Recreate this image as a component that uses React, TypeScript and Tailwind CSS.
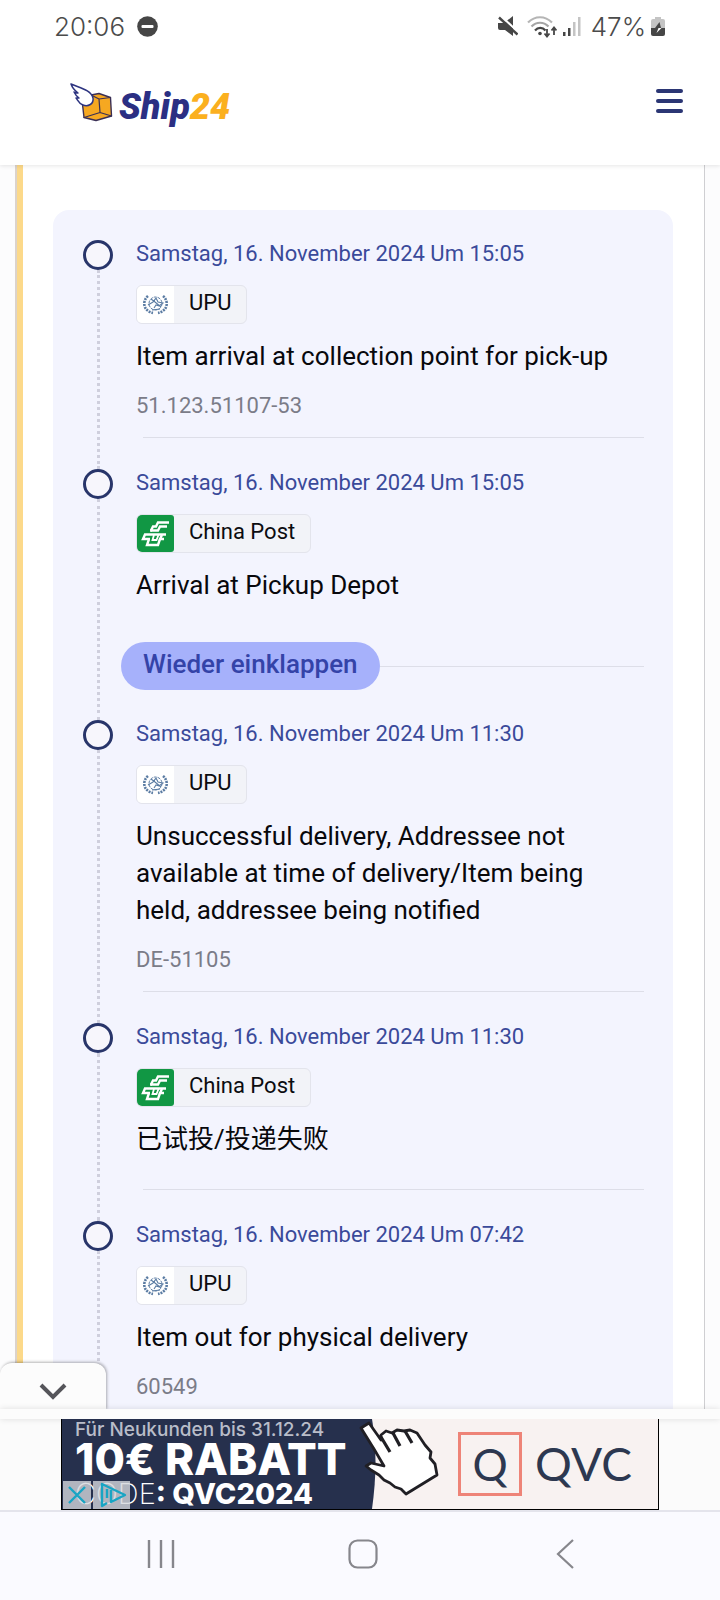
import { clsx } from 'clsx';

type Carrier = 'UPU' | 'China Post';

interface TrackingEvent {
  date: string;
  carrier: Carrier;
  title: string;
  code?: string;
  collapsible?: boolean;
}

const events: TrackingEvent[] = [
  {
    date: 'Samstag, 16. November 2024 Um 15:05',
    carrier: 'UPU',
    title: 'Item arrival at collection point for pick-up',
    code: '51.123.51107-53',
  },
  {
    date: 'Samstag, 16. November 2024 Um 15:05',
    carrier: 'China Post',
    title: 'Arrival at Pickup Depot',
    collapsible: true,
  },
  {
    date: 'Samstag, 16. November 2024 Um 11:30',
    carrier: 'UPU',
    title:
      'Unsuccessful delivery, Addressee not available at time of delivery/Item being held, addressee being notified',
    code: 'DE-51105',
  },
  {
    date: 'Samstag, 16. November 2024 Um 11:30',
    carrier: 'China Post',
    title: '已试投/投递失败',
  },
  {
    date: 'Samstag, 16. November 2024 Um 07:42',
    carrier: 'UPU',
    title: 'Item out for physical delivery',
    code: '60549',
  },
];

function StatusBar() {
  return (
    <div className="flex h-[53px] items-center justify-between pl-[54px] pr-[55px] text-[#4b4b4b]">
      <div className="flex items-center gap-3">
        <span className="font-[Inter,sans-serif] text-[26px] font-light leading-8">20:06</span>
        <svg width="21" height="21" viewBox="0 0 21 21">
          <circle cx="10.5" cy="10.5" r="10.3" fill="#464646" />
          <rect x="4.5" y="9" width="12" height="3" rx="1" fill="#fff" />
        </svg>
      </div>
      <div className="flex items-center">
        <svg width="20" height="21" viewBox="0 0 20 21" fill="#464646">
          <path d="M0 7h6l9-7v20l-8-6H2a2 2 0 0 1-2-2z" />
          <path d="M3 0l17 16" stroke="#fff" strokeWidth="2.2" />
          <path d="M1 1.500L19.500 18.500" stroke="#464646" strokeWidth="2.400" />
        </svg>
        <svg className="ml-[9px]" width="30" height="24" viewBox="0 0 30 24" fill="none" strokeWidth="2.200">
          <path d="M1 7.500C8 .5 18 .5 25 7.500" stroke="#b5b5b5" />
          <path d="M4.500 11.500c5-5 12-5 17 0" stroke="#a5a5a5" />
          <path d="M8 15.500c3-3.500 7.500-3.500 10.500 0" stroke="#464646" />
          <circle cx="13" cy="18.500" r="1.800" fill="#464646" />
          <path d="M20 14v7M17.500 18.500l2.500 3 2.500-3M27 20v-7M24.500 15.500l2.500-3 2.500 3" stroke="#464646" strokeWidth="1.800" />
        </svg>
        <svg className="ml-[6px]" width="18" height="20" viewBox="0 0 18 20">
          <rect x="0" y="15" width="2.500" height="4" fill="#464646" />
          <rect x="5" y="11" width="2.500" height="8" fill="#464646" />
          <rect x="10" y="5" width="2.500" height="14" fill="#c4c4c4" />
          <rect x="15" y="0" width="2.500" height="19" fill="#c4c4c4" />
        </svg>
        <span className="ml-[10px] font-[Inter,sans-serif] text-[26px] font-light leading-8">47%</span>
        <svg className="ml-[5px]" width="14" height="19" viewBox="0 0 14 19">
          <path d="M4 0h6v2h2a2 2 0 0 1 2 2v7H0V4a2 2 0 0 1 2-2h2z" fill="#c4c4c4" />
          <path d="M0 11h14v6a2 2 0 0 1-2 2H2a2 2 0 0 1-2-2z" fill="#464646" />
          <path d="M8.500 5L4 11h6z" fill="#464646" />
          <path d="M4.500 11h3l-2 5 5-5z" fill="#fff" />
        </svg>
      </div>
    </div>
  );
}

function Logo() {
  return (
    <a href="#" aria-label="Ship24" className="flex items-start gap-[6px]">
      <svg width="43" height="39" viewBox="0 0 43 39" strokeLinejoin="round" strokeLinecap="round">
        <path d="M12 17l9-5 8-1.500 11.500 4 1 18.500L26 37.500 14 34.500z" fill="#f6a821" stroke="#3a2f55" strokeWidth="1.400" />
        <path d="M21 12l8 4 11.500-1.500M29 16l1 13.500 11.500 3.500M30 29.500l-16 5" fill="none" stroke="#3a2f55" strokeWidth="1.200" />
        <path d="M1 1c9 4 20 6 22 14 1 6-5 9-10 7C8 20 8 17 6 15c1 0 2 0 3 0-3-2-4-4-5-6 1 1 2 1 4 1C4 7 2 4 1 1z" fill="#fff" stroke="#2d3480" strokeWidth="1.500" />
      </svg>
      <span className="pt-1 font-[Roboto,sans-serif] text-[36px] font-black italic leading-10 text-[#2b2f83]">
        Ship<span className="text-[#fbb01f]">24</span>
      </span>
    </a>
  );
}

function Header() {
  return (
    <header className="relative z-10 shrink-0 bg-white shadow-[0_1px_4px_rgba(0,0,0,0.1)]">
      <StatusBar />
      <div className="flex h-28 items-start justify-between pl-[70px] pr-[37px] pt-[30px]">
        <Logo />
        <button type="button" aria-label="Menü" className="flex w-[27px] flex-col gap-[6px] pt-[6px]">
          <span className="h-1 w-full rounded-sm bg-[#2b3674]" />
          <span className="h-1 w-full rounded-sm bg-[#2b3674]" />
          <span className="h-1 w-full rounded-sm bg-[#2b3674]" />
        </button>
      </div>
    </header>
  );
}

function UpuIcon() {
  return (
    <svg width="37" height="37" viewBox="0 0 37 37" fill="none" stroke="#5b7ca3">
      <rect width="37" height="37" fill="#fff" stroke="none" />
      <path d="M11 10c-6 5-5 15 5 17M26 10c6 5 5 15-5 17" strokeWidth="2.600" strokeDasharray="2 1" />
      <circle cx="18.500" cy="17.500" r="6.500" strokeWidth="1" strokeDasharray="3 1" />
      <path d="M11 19l5-3 3-4 2 4 5 1-4 3-3-1-2 3M14 13l4 3 6 5M15 24l8-1" strokeWidth="1.100" />
    </svg>
  );
}

function ChinaPostIcon() {
  return (
    <svg width="37" height="37" viewBox="0 0 37 37">
      <rect width="37" height="37" rx="3" fill="#119744" />
      <g fill="none" stroke="#fff" strokeWidth="2.400">
        <path d="M32 7.500H21l-2 4h-3l-2 4h-1" />
        <path d="M30 11.500h-7l-2 4h-7" />
        <path d="M29 19.500H8l-2 4.500h7" />
        <path d="M27 24h-4l2-4M23 24l-2 6H10l2-6" />
        <path d="M17 20l-1.500 5h4l2-5" strokeWidth="1.800" />
      </g>
    </svg>
  );
}

function CarrierBadge({ carrier }: { carrier: Carrier }) {
  return (
    <div className="mt-[17px] flex h-[39px] w-fit items-center overflow-hidden rounded-md border border-[#e3e4ec] bg-[#f2f3f8]">
      {carrier === 'UPU' ? <UpuIcon /> : <ChinaPostIcon />}
      <span className="px-[15px] pb-[3px] text-[22px] leading-7 text-[#0c0c10]">{carrier}</span>
    </div>
  );
}

function EventRow({ event, last }: { event: TrackingEvent; last: boolean }) {
  return (
    <li className="flex gap-[23px]">
      <div className="flex w-[30px] shrink-0 flex-col items-center">
        <span className="h-[30px] w-[30px] shrink-0 rounded-full border-3 border-[#28356a] bg-[#f7f6fc]" />
        <span className="flex-1 border-l-3 border-dotted border-[#cfcfdd]" />
      </div>
      <div className="min-w-0 flex-1">
        <p className="text-[22px] leading-7 text-[#3a4a9a]">{event.date}</p>
        <CarrierBadge carrier={event.carrier} />
        <p className="mt-[14px] pr-4 text-[26px] leading-[37px] text-[#08080c]">{event.title}</p>
        <p className={clsx('text-[22px] leading-7 text-[#7b7c88]', event.code ? 'mt-[17px]' : 'h-[31px]')}>
          {event.code}
        </p>
        {event.collapsible ? (
          <div className="-ml-[15px] mt-[7px] flex items-center pb-[30px]">
            <button
              type="button"
              className="h-12 rounded-full bg-[#a6b1fb] px-[22px] pb-[3px] text-[26px] font-medium leading-[37px] text-[#3443a8]"
            >
              Wieder einklappen
            </button>
            <span className="h-px flex-1 bg-[#dddee8]" />
          </div>
        ) : (
          <div className={clsx('ml-[7px] pb-[31px]', event.code && 'pt-[17px]', last && 'invisible')}>
            <div className="h-px bg-[#dddee8]" />
          </div>
        )}
      </div>
    </li>
  );
}

function HandPointer() {
  return (
    <svg className="h-[90px] w-[85px] shrink-0" viewBox="0 0 85 90">
      <path d="M0 0h13q7 40 0 90H0z" fill="#26304d" />
      <path
        d="M2 9l8-5 12 17v-5l5-4 6 2 5-3 7 1 6-1 7 3 6 9 2 3 6 7-1 6 5 6 2 11-31 19-5-5-6-2-5-4-6-3-5-5-8-5-5-4 5-3 13 3-10-17z"
        fill="#fff"
        stroke="#201f24"
        strokeWidth="2.800"
        strokeLinejoin="round"
      />
      <path d="M22 18l9 15M34 14l7 13M46 12l7 12" fill="none" stroke="#201f24" strokeWidth="3.200" />
    </svg>
  );
}

function AdBanner() {
  return (
    <a
      href="#"
      className="relative mx-auto flex h-[91px] w-[598px] max-w-full overflow-hidden border-b border-r border-l border-black bg-[#f8f2f1] font-[Inter,sans-serif]"
    >
      <div className="w-[297px] shrink-0 whitespace-nowrap bg-[#26304d] pl-[13px] text-white">
        <p className="text-[19px] font-medium leading-[22px] text-[#b9bdc9]">Für Neukunden bis 31.12.24</p>
        <p className="text-[44px] font-extrabold leading-[36px]">10€ RABATT</p>
        <p className="text-[29px] leading-[34px]">
          <span className="font-extralight">CODE</span>
          <span className="font-extrabold">: QVC2024</span>
        </p>
      </div>
      <HandPointer />
      <div className="flex items-center gap-[13px] pl-[14px] font-[Lato,sans-serif] leading-none text-[#2d3850]">
        <span className="flex h-16 w-16 items-center justify-center border-3 border-[#ee8478] text-[44px]">Q</span>
        <span className="text-[46px]">QVC</span>
      </div>
      <svg className="absolute bottom-0 left-0" width="68" height="28" viewBox="0 0 68 28" fill="none">
        <rect x="1" width="28" height="28" fill="#d5d7dc" fillOpacity=".8" />
        <rect x="31" width="37" height="28" fill="#d5d7dc" fillOpacity=".8" />
        <path d="M7 6l16 16M23 6L7 22" stroke="#18a5c4" strokeWidth="2.400" />
        <path d="M45 22l-5 3V3l23 11-14 7V9M45 8v9" stroke="#18a5c4" strokeWidth="2.400" strokeLinejoin="round" />
      </svg>
    </a>
  );
}

function NavigationBar() {
  return (
    <nav className="flex h-[90px] items-center justify-between border-t-2 border-[#e4e4ec] bg-[#fafaff] pb-1 pl-[146px] pr-[140px] text-[#86868c]">
      <button type="button" aria-label="Letzte Apps" className="flex w-[30px] justify-center">
        <svg width="28" height="30" viewBox="0 0 28 30" stroke="currentColor" strokeWidth="2.400">
          <path d="M2 1v28M14 1v28M26 1v28" />
        </svg>
      </button>
      <button type="button" aria-label="Startseite" className="flex w-[30px] justify-center">
        <svg width="30" height="30" viewBox="0 0 30 30" fill="none" stroke="currentColor" strokeWidth="2.200">
          <rect x="1.500" y="1.500" width="27" height="27" rx="8" />
        </svg>
      </button>
      <button type="button" aria-label="Zurück" className="flex w-[30px] justify-center">
        <svg width="18" height="30" viewBox="0 0 18 30" fill="none" stroke="currentColor" strokeWidth="2.200">
          <path d="M17 1L2 15l15 14" />
        </svg>
      </button>
    </nav>
  );
}

export default function App() {
  return (
    <div className="flex h-screen flex-col overflow-hidden bg-[#fcfcfd] font-[Roboto,'Noto_Sans_CJK_SC',sans-serif]">
      <Header />
      <main className="min-h-0 flex-1 overflow-hidden pl-[15px] pr-[15px]">
        <div className="min-h-full border-l-2 border-r border-l-[#dcd3cb] border-r-[#cfcfd2]">
          <div className="border-l-6 border-[#fcd98a] bg-white pl-[30px] pr-[31px] pt-[45px]">
            <ol className="rounded-2xl bg-[#f3f4fe] pl-[30px] pr-[29px] pt-[30px]">
              {events.map((event, i) => (
                <EventRow key={i} event={event} last={i === events.length - 1} />
              ))}
            </ol>
          </div>
        </div>
      </main>
      <footer className="relative shrink-0 bg-[#fbfbfb]">
        <button
          type="button"
          aria-label="Anzeige ausblenden"
          className="absolute -top-[46px] left-0 flex h-[47px] w-[106px] items-center justify-center rounded-t-xl bg-[#fcfcfc] pt-2 shadow-[1px_-1px_3px_rgba(0,0,0,0.3)]"
        >
          <svg width="28" height="18" viewBox="0 0 28 18" fill="none" stroke="#55555a" strokeWidth="4">
            <path d="M2 3l12 12L26 3" />
          </svg>
        </button>
        <div className="relative h-[10px] bg-[#fcfcfc] shadow-[0_0_6px_rgba(0,0,0,0.12)]" />
        <AdBanner />
        <NavigationBar />
      </footer>
    </div>
  );
}
